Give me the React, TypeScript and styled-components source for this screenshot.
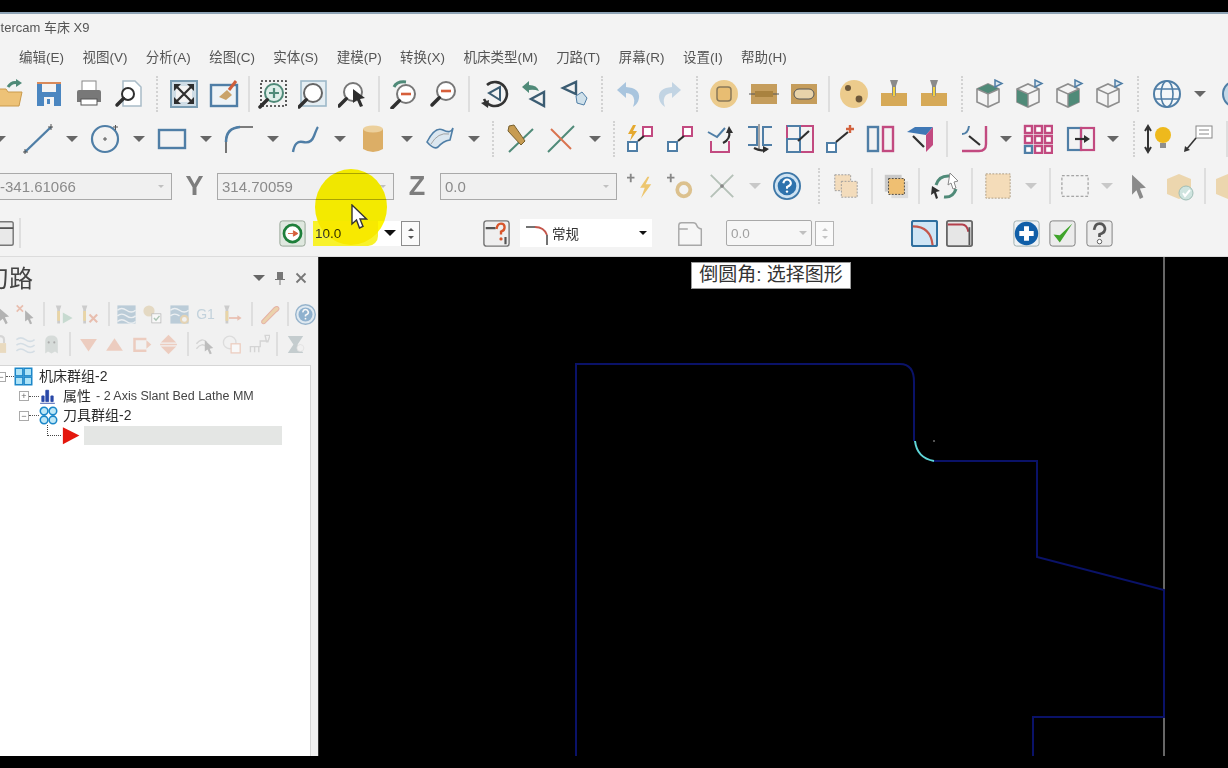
import React from 'react';
import styled, { createGlobalStyle } from 'styled-components';

const GlobalStyle = createGlobalStyle`
  html, body { margin: 0; padding: 0; background: #000; height: 100%; overflow: hidden; }
  body { font-family: "Liberation Sans", "Noto Sans CJK SC", sans-serif; }
`;

const BLUE = '#4f7ea6';
const PINK = '#c24a80';
const DARK = '#2f2f2f';
const TEAL = '#4f8a78';
const GREY = '#9a9a9a';

const Frame = styled.div`
  width: 1228px;
  height: 768px;
  padding: 12px 0;
  box-sizing: border-box;
  background: #000;
  overflow: hidden;
  display: flex;
  flex-direction: column;
  filter: blur(0.45px);
`;

const Bars = styled.header`
  position: relative;
  flex: none;
  background: #f3f3f3;
  border-top: 2px solid #8ea3b5;
  border-bottom: 1px solid #dcdcdc;
  overflow: hidden;
`;

const TitleBar = styled.div`
  box-sizing: border-box;
  height: 28px;
  padding-bottom: 3px;
  display: flex;
  align-items: center;
  margin-left: -24px;
  font-size: 13px;
  color: #555;
`;

const MenuBar = styled.nav`
  box-sizing: border-box;
  height: 30px;
  padding: 0 0 3px 19px;
  display: flex;
  align-items: center;
  gap: 18.4px;
  font-size: 13.5px;
  color: #555;
  white-space: nowrap;
`;

const Row = styled.div<{ $h: number; $shift?: number }>`
  height: ${(p) => p.$h}px;
  display: flex;
  align-items: center;
  margin-left: ${(p) => p.$shift ?? 0}px;
  white-space: nowrap;
`;

const Slot = styled.span<{ $w?: number }>`
  flex: none;
  width: ${(p) => p.$w ?? 40}px;
  display: flex;
  align-items: center;
  justify-content: center;
`;

const Sep = styled.span<{ $w: number; $dots?: boolean; $h?: number }>`
  flex: none;
  width: ${(p) => p.$w}px;
  height: ${(p) => p.$h ?? 36}px;
  display: flex;
  justify-content: center;
  &::after {
    content: '';
    display: block;
    border-left: ${(p) => (p.$dots ? '2px dotted #d2d2d2' : '2px solid #dedede')};
  }
`;

const Gap = styled.span<{ $w: number }>`
  flex: none;
  width: ${(p) => p.$w}px;
`;

const Caret = styled.span<{ $w?: number; $dim?: boolean; $dark?: boolean }>`
  flex: none;
  width: ${(p) => p.$w ?? 27}px;
  display: flex;
  justify-content: center;
  &::after {
    content: '';
    border-left: 6.5px solid transparent;
    border-right: 6.5px solid transparent;
    border-top: 6px solid ${(p) => (p.$dim ? '#c8c8c8' : p.$dark ? '#111' : '#666')};
  }
`;

const Axis = styled.span<{ $w: number }>`
  flex: none;
  width: ${(p) => p.$w}px;
  text-align: center;
  font-size: 27px;
  font-weight: 700;
  color: #7d7d7d;
`;

const Field = styled.span<{ $w: number; $pad?: number }>`
  flex: none;
  box-sizing: border-box;
  width: ${(p) => p.$w}px;
  height: 27px;
  display: flex;
  align-items: center;
  justify-content: space-between;
  padding: 0 4px 0 ${(p) => p.$pad ?? 4}px;
  border: 1px solid #a9a9a9;
  background: #f0f0f0;
  font-size: 15px;
  color: #8b8b8b;
  &::after {
    content: '';
    border-left: 3px solid transparent;
    border-right: 3px solid transparent;
    border-top: 3px solid #c0c0c0;
    margin-right: 3px;
  }
`;

const SmallField = styled(Field)`
  height: 26px;
  background: #f6f6f6;
  border-radius: 2px;
  font-size: 13.5px;
  color: #a0a0a0;
  &::after {
    border-left-width: 4px;
    border-right-width: 4px;
    border-top-width: 4px;
    margin-right: 0;
  }
`;

const NumberBox = styled.span`
  flex: none;
  box-sizing: border-box;
  width: 88px;
  height: 25px;
  display: flex;
  align-items: center;
  background: #fff;
`;

const NumberText = styled.span`
  width: 65px;
  height: 25px;
  line-height: 25px;
  padding-left: 2px;
  box-sizing: border-box;
  background: #f8f22c;
  border-radius: 0 0 10px 0;
  font-size: 13.5px;
  color: #333;
`;

const Spinner = styled.span<{ $dim?: boolean }>`
  flex: none;
  box-sizing: border-box;
  width: 19px;
  height: 25px;
  display: flex;
  flex-direction: column;
  align-items: center;
  justify-content: center;
  gap: 5px;
  border: 1px solid ${(p) => (p.$dim ? '#b5b5b5' : '#8c8c8c')};
  background: #fafafa;
  &::before, &::after {
    content: '';
    border-left: 3px solid transparent;
    border-right: 3px solid transparent;
  }
  &::before { border-bottom: 3px solid ${(p) => (p.$dim ? '#c4c4c4' : '#555')}; }
  &::after { border-top: 3px solid ${(p) => (p.$dim ? '#c4c4c4' : '#555')}; }
`;

const Combo = styled.span`
  flex: none;
  box-sizing: border-box;
  width: 132px;
  height: 28px;
  padding: 0 4px;
  display: flex;
  align-items: center;
  gap: 4px;
  background: #fff;
  font-size: 13.5px;
  color: #333;
  &::after {
    content: '';
    margin-left: auto;
    border-left: 4.5px solid transparent;
    border-right: 4.5px solid transparent;
    border-top: 4.5px solid #111;
    margin-right: 1px;
  }
`;

const Highlight = styled.div`
  position: absolute;
  left: 315px;
  top: 155px;
  width: 72px;
  height: 76px;
  border-radius: 50%;
  background: #fff600;
  mix-blend-mode: multiply;
  pointer-events: none;
`;

const Pointer = styled.svg`
  position: absolute;
  left: 350px;
  top: 190px;
`;

const Main = styled.main`
  flex: 1;
  min-height: 0;
  display: flex;
`;

const Panel = styled.aside`
  flex: none;
  width: 318px;
  background: #f1f1f1;
  display: flex;
  flex-direction: column;
  overflow: hidden;
`;

const PanelHead = styled.div`
  box-sizing: border-box;
  height: 42px;
  flex: none;
  display: flex;
  align-items: center;
  justify-content: space-between;
  padding: 0 11px 0 0;
`;

const PanelTitle = styled.h2`
  margin: 0 0 4px -15px;
  font-size: 24px;
  font-weight: 400;
  color: #444;
`;

const PanelActions = styled.div`
  display: flex;
  align-items: center;
  gap: 9px;
`;

const Tree = styled.div`
  flex: 1;
  margin: 6px 7px 0 -1px;
  padding-top: 1px;
  background: #fff;
  border: 1px solid #d6d6d6;
  border-bottom: 0;
`;

const Node = styled.div<{ $indent: number }>`
  height: 19.5px;
  display: flex;
  align-items: center;
  margin-left: ${(p) => p.$indent}px;
  font-size: 14px;
  color: #2d2d2d;
  white-space: nowrap;
`;

const Expander = styled.span`
  flex: none;
  box-sizing: border-box;
  width: 10px;
  height: 10px;
  border: 1px solid #aaa;
  font-size: 9px;
  line-height: 8px;
  text-align: center;
  color: #666;
`;

const Link = styled.span<{ $w: number }>`
  flex: none;
  width: ${(p) => p.$w}px;
  border-top: 1px dotted #555;
`;

const Elbow = styled.span`
  flex: none;
  width: 13px;
  height: 10px;
  margin-top: -10px;
  border-left: 1px dotted #444;
  border-bottom: 1px dotted #444;
`;

const NodeLabel = styled.span<{ $gap: number }>`
  margin: 0 0 3px ${(p) => p.$gap}px;
`;

const NodeMeta = styled.span`
  margin-left: 5px;
  font-size: 12.5px;
  color: #444;
`;

const EmptyName = styled.span`
  width: 198px;
  height: 19px;
  margin-left: 4px;
  background: #e4e6e4;
`;

const Canvas = styled.section`
  position: relative;
  flex: 1;
  background: #000;
  border-left: 1px solid #333;
  overflow: hidden;
`;

const Drawing = styled.svg`
  display: block;
  width: 100%;
  height: 100%;
`;

const Prompt = styled.div`
  position: absolute;
  left: 372px;
  top: 5px;
  box-sizing: border-box;
  width: 160px;
  height: 27px;
  line-height: 23px;
  text-align: center;
  background: #fff;
  border: 1px solid #9a9a9a;
  font-size: 19px;
  color: #333;
  white-space: nowrap;
`;

const Glyph = styled.svg<{ $dim?: boolean }>`
  display: block;
  flex: none;
  opacity: ${(p) => (p.$dim ? 0.5 : 1)};
`;

const glass = (x: number, y: number, r: number, fill = '#fff', c = '#555') => (
  <>
    <circle cx={x} cy={y} r={r} fill={fill} stroke={c} strokeWidth="2" />
    <path d={`M${x - r * 0.75} ${y + r * 0.75}L${x - r - 5} ${y + r + 5}`} stroke={DARK} strokeWidth="3.5" strokeLinecap="round" />
  </>
);

const arrow = (d: string, c = DARK) => <path d={d} fill="none" stroke={c} strokeWidth="2.2" />;

const cube = (side: 'top' | 'left' | 'right' | 'none') => (
  <>
    <path d="M3 10l11-5 11 5v13l-11 5-11-5z" fill="#f4f4f4" stroke="#8e8e8e" strokeWidth="1.6" />
    {side === 'top' && <path d="M3 10l11-5 11 5-11 5z" fill={TEAL} />}
    {side === 'left' && <path d="M3 10l11 5v13l-11-5z" fill={TEAL} />}
    {side === 'right' && <path d="M25 10l-11 5v13l11-5z" fill={TEAL} />}
    <path d="M3 10l11 5 11-5M14 15v13" fill="none" stroke="#8e8e8e" strokeWidth="1.4" />
    <path d="M21 8V1l7 3.5z" fill="#dfe8ef" stroke={BLUE} strokeWidth="1.5" />
  </>
);

const pair = (a: string, b: string) => (
  <>
    <rect x="3" y="18" width="9" height="9" fill="#fff" stroke={a} strokeWidth="2" />
    <rect x="18" y="3" width="9" height="9" fill="#fff" stroke={b} strokeWidth="2" />
    {arrow('M13 17l6-5', DARK)}
  </>
);

const shapes: Record<string, React.ReactNode> = {
  folder: (
    <>
      <path d="M2 10h10l2 3h14l-3 14H2z" fill="#edc277" stroke="#c99a4c" />
      <path d="M14 8q4-6 10-4" fill="none" stroke={TEAL} strokeWidth="3" />
      <path d="M22 0l6 4-6 4z" fill={TEAL} />
    </>
  ),
  save: (
    <>
      <path d="M3 3h24v24H3z" fill="#4b86c0" />
      <path d="M3 3h24v2H3z" fill="#d98a5a" />
      <rect x="8" y="5" width="14" height="8" fill="#f3f3f3" />
      <rect x="10" y="18" width="10" height="9" fill="#f3f3f3" />
      <rect x="13" y="20" width="3" height="5" fill="#4b86c0" />
    </>
  ),
  print: (
    <>
      <rect x="8" y="2" width="14" height="12" fill="#fff" stroke="#888" />
      <path d="M3 13q0-2 2-2h20q2 0 2 2v10H3z" fill="#787878" />
      <rect x="7" y="20" width="16" height="6" fill="#fff" stroke="#555" />
    </>
  ),
  preview: (
    <>
      <path d="M9 2h12l6 6v19H9z" fill="#fff" stroke="#a9bcc8" strokeWidth="1.5" />
      {glass(14, 15, 6, '#fff', DARK)}
    </>
  ),
  fit: (
    <>
      <rect x="2" y="2" width="26" height="26" fill="#cfdde6" stroke="#7b9db3" strokeWidth="2" />
      <rect x="7" y="7" width="16" height="16" fill="#f3f3f3" />
      {arrow('M7 7l16 16M23 7L7 23')}
      <path d="M5 5h7l-7 7zM25 5v7l-7-7zM5 25v-7l7 7zM25 25h-7l7-7z" fill={DARK} />
    </>
  ),
  paint: (
    <>
      <rect x="2" y="6" width="26" height="21" fill="#eef3f6" stroke={BLUE} strokeWidth="2.4" />
      <path d="M10 18l8-7 5 5-6 5z" fill="#c9a36a" />
      <path d="M20 11l7-9" stroke="#d05f3b" strokeWidth="3" />
    </>
  ),
  zoomWin: (
    <>
      <rect x="3" y="2" width="25" height="25" fill="none" stroke="#333" strokeWidth="1.6" strokeDasharray="2 2" />
      {glass(16, 14, 9, '#dfeee9', TEAL)}
      <path d="M16 9v10M11 14h10" stroke={TEAL} strokeWidth="2.2" />
    </>
  ),
  zoomGlass: (
    <>
      <rect x="3" y="2" width="25" height="25" fill="#e5eef3" stroke="#9db8c9" strokeWidth="1.6" />
      {glass(15, 14, 9, '#fff', '#666')}
    </>
  ),
  zoomCursor: (
    <>
      {glass(15, 13, 9, '#fff', '#777')}
      <path d="M15 10l12 9-5 1 3 7-3 1-3-7-4 3z" fill={DARK} />
    </>
  ),
  zoomOutB: (
    <>
      <path d="M5 8q3-6 12-5" fill="none" stroke={TEAL} strokeWidth="3" />
      {glass(17, 15, 9, '#fff', '#777')}
      <path d="M12 15h10" stroke="#d65f3b" strokeWidth="2.6" />
    </>
  ),
  zoomOut: (
    <>
      {glass(17, 12, 9, '#fff', '#777')}
      <path d="M12 12h10" stroke="#d65f3b" strokeWidth="2.6" />
    </>
  ),
  rotA: (
    <>
      <path d="M8 6a12 12 0 1 1-3 14" fill="none" stroke="#333" strokeWidth="2.6" />
      <path d="M2 24l8-3-1 8z" fill="#333" />
      <path d="M21 8v13L10 14z" fill="none" stroke="#3b5c72" strokeWidth="2" />
    </>
  ),
  undoA: (
    <>
      <path d="M3 8l7-6v4q8 0 10 6-5-2-10-1v3z" fill={TEAL} />
      <path d="M25 13v14l-13-7z" fill="none" stroke="#3b5c72" strokeWidth="2.4" />
    </>
  ),
  planeA: (
    <>
      <path d="M17 3v12L4 9z" fill="none" stroke="#3b5c72" strokeWidth="2.4" />
      <path d="M17 17l6-4 5 6-3 7-7-2z" fill="#cfe0ea" stroke={BLUE} />
    </>
  ),
  undo: <path d="M3 11l9-8v5q14 1 13 11-1 6-6 9 3-8-1-12-3-2-6-2v5z" fill="#a9c5de" />,
  redo: <path d="M27 11l-9-8v5Q4 9 5 19q1 6 6 9-3-8 1-12 3-2 6-2v5z" fill="#c2d4e3" />,
  badge: (
    <>
      <circle cx="15" cy="15" r="14" fill="#eccb8c" />
      <rect x="8" y="8" width="14" height="14" rx="3" fill="#e8bd72" stroke="#8a7a5a" strokeWidth="1.5" />
    </>
  ),
  slab: (
    <>
      <rect x="2" y="5" width="26" height="20" fill="#c59d5c" />
      <path d="M0 15h30" stroke="#555" strokeWidth="1" />
      <rect x="6" y="12" width="18" height="6" fill="#a9823f" />
    </>
  ),
  slabO: (
    <>
      <rect x="2" y="5" width="26" height="20" fill="#c59d5c" />
      <rect x="5" y="10" width="20" height="10" rx="5" fill="#e8d3aa" stroke="#555" />
    </>
  ),
  ball: (
    <>
      <circle cx="15" cy="15" r="14" fill="#eccb8c" />
      <circle cx="9" cy="9" r="3" fill="#6c573a" />
      <circle cx="20" cy="20" r="3.4" fill="#6c573a" />
    </>
  ),
  mill: (
    <>
      <rect x="2" y="14" width="26" height="13" fill="#d6a957" />
      <path d="M11 1h8l-2 6v9q-2 3-4 0V7z" fill="#8a8a8a" />
      <path d="M14 8h2v9h-2z" fill="#f2d23e" />
    </>
  ),
  cubeTop: cube('top'),
  cubeLeft: cube('left'),
  cubeRight: cube('right'),
  cubePlain: cube('none'),
  globe: (
    <>
      <circle cx="15" cy="15" r="13" fill="#f4f7f9" stroke={BLUE} strokeWidth="2" />
      <ellipse cx="15" cy="15" rx="6" ry="13" fill="none" stroke={BLUE} strokeWidth="1.6" />
      <path d="M3 10h24M3 20h24" stroke={BLUE} strokeWidth="1.6" />
    </>
  ),
  disc: <circle cx="18" cy="15" r="13" fill="#c3d8e8" stroke={BLUE} strokeWidth="2" />,
  line: (
    <>
      <path d="M2 28L28 3" stroke={BLUE} strokeWidth="2.4" />
      <path d="M25 3h6M28 0v6M-1 28h6M2 25v6" stroke="#555" strokeWidth="1" />
    </>
  ),
  circle: (
    <>
      <circle cx="15" cy="15" r="13" fill="none" stroke={BLUE} strokeWidth="2.2" />
      <path d="M13 15h4M15 13v4M23 3h5M25.500 1v5" stroke="#555" strokeWidth="1" />
    </>
  ),
  rect: <rect x="2" y="6" width="26" height="18" fill="none" stroke={BLUE} strokeWidth="2.4" />,
  arc: (
    <>
      <path d="M2 29V18Q2 4 16 3h13" fill="none" stroke="#555" strokeWidth="1.6" />
      <path d="M2 18Q2 4 16 3" fill="none" stroke={BLUE} strokeWidth="2.6" />
    </>
  ),
  spline: <path d="M2 28q2-12 10-10t11-6 4-9" fill="none" stroke={BLUE} strokeWidth="2.4" />,
  cyl: (
    <>
      <path d="M5 5v20q10 6 20 0V5z" fill="#dcae66" />
      <ellipse cx="15" cy="5" rx="10" ry="3.500" fill="#ecd09c" />
    </>
  ),
  surface: (
    <>
      <path d="M2 18Q10 2 18 6t10-2l-3 12q-7 1-12 7-4 3-11-5z" fill="#dbe7f0" stroke={BLUE} strokeWidth="1.6" />
      <path d="M6 20Q13 8 24 10" fill="none" stroke="#a3a3a3" />
    </>
  ),
  trim: (
    <>
      <path d="M4 28L28 5" stroke={TEAL} strokeWidth="2" />
      <path d="M4 2l5-1 11 16-4 4L3 7z" fill="#c79c52" stroke="#77602f" />
    </>
  ),
  cross: (
    <>
      <path d="M2 28L28 2" stroke={TEAL} strokeWidth="2" />
      <path d="M5 5l20 20" stroke="#d9734f" strokeWidth="2" />
    </>
  ),
  boltPair: (
    <>
      {pair(BLUE, PINK)}
      <path d="M8 1L3 10h4l-2 7 7-10H8l3-6z" fill="#e5a92f" />
    </>
  ),
  plainPair: pair(BLUE, PINK),
  rotatePath: (
    <>
      <path d="M3 8l9 5 8-9" fill="none" stroke={BLUE} strokeWidth="2" />
      <path d="M6 17v11h18V17" fill="none" stroke={PINK} strokeWidth="2" />
      {arrow('M18 19q8-4 6-12')}
      <path d="M24 2l4 7h-7z" fill={DARK} />
    </>
  ),
  mirror: (
    <>
      <path d="M3 3h9v18H3M27 3h-9v18h9" fill="none" stroke={BLUE} strokeWidth="2" />
      <path d="M14 0v26" stroke="#555" strokeWidth="1" />
      {arrow('M9 24q7 4 13 1')}
      <path d="M24 25l-6 4v-7z" fill={DARK} />
    </>
  ),
  scale: (
    <>
      <rect x="2" y="2" width="26" height="26" fill="none" stroke={PINK} strokeWidth="2" />
      <path d="M2 15v13h13V15zM2 2h13v13" fill="none" stroke={BLUE} strokeWidth="2" />
      {arrow('M13 17L24 7')}
    </>
  ),
  extend: (
    <>
      <rect x="2" y="19" width="9" height="9" fill="#fff" stroke={BLUE} strokeWidth="2" />
      {arrow('M11 18L23 8')}
      <path d="M25 1v8M21 5h8" stroke="#d2613c" strokeWidth="2.4" />
    </>
  ),
  columns: (
    <>
      <rect x="3" y="3" width="10" height="24" fill="none" stroke={BLUE} strokeWidth="2.4" />
      <rect x="18" y="3" width="10" height="24" fill="none" stroke={PINK} strokeWidth="2.4" />
    </>
  ),
  box3d: (
    <>
      <path d="M2 8l8-5h18l-7 8z" fill="#3f78b5" />
      <path d="M21 11l7-8v18l-7 7z" fill={PINK} />
      {arrow('M8 12l11 11')}
    </>
  ),
  fillet: (
    <>
      <path d="M3 27h17q7 0 7-7V2" fill="none" stroke={PINK} strokeWidth="2.4" />
      <path d="M3 10q6 0 7-8" fill="none" stroke={BLUE} strokeWidth="2" />
      {arrow('M10 12l11 9')}
    </>
  ),
  grid: (
    <>
      {[2, 12, 22].map((x) =>
        [2, 12, 22].map((y) => (
          <rect key={`${x}-${y}`} x={x} y={y} width="7" height="7" fill="#fff" stroke={x === 2 && y === 22 ? BLUE : PINK} strokeWidth="2.4" />
        ))
      )}
    </>
  ),
  moveTo: (
    <>
      <rect x="2" y="4" width="13" height="22" fill="none" stroke={BLUE} strokeWidth="2.2" />
      <rect x="15" y="4" width="13" height="22" fill="none" stroke={PINK} strokeWidth="2.2" />
      {arrow('M9 15h11')}
      <path d="M24 15l-6 4v-8z" fill={DARK} />
    </>
  ),
  bulb: (
    <>
      <path d="M4 3v24M1 7l3-5 3 5M1 23l3 5 3-5" fill="none" stroke="#333" strokeWidth="2" />
      <circle cx="19" cy="11" r="8" fill="#eeb91c" />
      <rect x="16" y="19" width="6" height="5" fill="#8e8e8e" />
    </>
  ),
  note: (
    <>
      <rect x="13" y="2" width="16" height="12" fill="#fff" stroke="#888" />
      <path d="M16 6h10M16 10h10" stroke="#888" />
      <path d="M13 14L3 26" stroke="#333" strokeWidth="1.6" />
      <path d="M1 28l1-6 5 4z" fill="#333" />
    </>
  ),
  plusBolt: (
    <>
      <path d="M4 2v9M0 6h8" stroke="#888" strokeWidth="2" />
      <path d="M22 5l-8 12h5l-4 11 11-15h-6l4-8z" fill="#edc66f" />
    </>
  ),
  plusGear: (
    <>
      <path d="M4 2v9M0 6h8" stroke="#888" strokeWidth="2" />
      <circle cx="18" cy="19" r="7" fill="none" stroke="#dcc18e" strokeWidth="4" />
    </>
  ),
  crossGrey: (
    <>
      <path d="M3 3l24 24M27 3L3 27" stroke="#b5c1b8" strokeWidth="2" />
      <circle cx="15" cy="15" r="2" fill="#888" />
    </>
  ),
  help: (
    <>
      <circle cx="15" cy="15" r="14" fill="#cfe3f2" stroke="#3f78a8" strokeWidth="2" />
      <circle cx="15" cy="15" r="10" fill="#2f73ad" />
      <path d="M11 12q1-4 4-4t4 3-4 5v2" fill="none" stroke="#fff" strokeWidth="2.2" />
      <circle cx="15" cy="21" r="1.300" fill="#fff" />
    </>
  ),
  dotStack: (
    <>
      <rect x="3" y="3" width="17" height="17" fill="#f3dcbc" stroke="#999" strokeDasharray="2 1.500" />
      <rect x="10" y="10" width="17" height="17" fill="#f3dcbc" stroke="#999" strokeDasharray="2 1.500" />
    </>
  ),
  solidStack: (
    <>
      <rect x="3" y="3" width="18" height="18" fill="#c9c9c9" />
      <rect x="10" y="10" width="18" height="18" fill="#ddd" />
      <rect x="7" y="7" width="17" height="17" fill="#efbf72" stroke="#444" strokeDasharray="2 1.500" />
    </>
  ),
  swap: (
    <>
      <path d="M6 14q3-10 14-9" fill="none" stroke={TEAL} strokeWidth="3" />
      <path d="M26 18q-3 9-12 8" fill="none" stroke={TEAL} strokeWidth="3" />
      <path d="M2 15l8 5-4 1 2 6-2 1-2-6-3 2z" fill={DARK} />
      <path d="M20 2l8 8-4 1 2 6-3 1-2-6-3 2z" fill="#fff" stroke="#888" />
    </>
  ),
  dotFill: <rect x="2" y="2" width="26" height="26" fill="#f4dcb9" stroke="#aa9a80" strokeDasharray="2 1.500" />,
  dotEmpty: <rect x="1" y="4" width="28" height="22" fill="none" stroke="#888" strokeDasharray="3 2" />,
  cursor: <path d="M7 2l16 15-7 1 4 10-4 2-4-10-5 5z" fill="#8a8a8a" />,
  boxCheck: (
    <>
      <path d="M3 8l12-5 12 5v15l-12 5-12-5z" fill="#ecd6ae" />
      <circle cx="22" cy="22" r="7" fill="#cfe4df" stroke="#9fbdb5" />
      <path d="M19 22l2 3 5-6" fill="none" stroke="#fff" strokeWidth="2" />
    </>
  ),
  boxTan: <path d="M3 8l12-5 12 5v15l-12 5-12-5z" fill="#ecd6ae" />,
  window: (
    <>
      <rect x="3" y="2" width="25" height="26" rx="2" fill="#e9e9e9" stroke="#777" strokeWidth="1.6" />
      <path d="M4 9h24" stroke="#555" strokeWidth="2" />
    </>
  ),
  target: (
    <>
      <rect x="1" y="1" width="28" height="28" rx="3" fill="#dfe8df" stroke="#8f9f90" />
      <circle cx="15" cy="15" r="9.500" fill="#fff" stroke="#1e7f3a" strokeWidth="3" />
      <path d="M10 15h6v-3l5 3-5 3v-3" fill="#d65f3b" stroke="#d65f3b" />
    </>
  ),
  ask: (
    <>
      <rect x="1" y="1" width="28" height="28" rx="3" fill="#efefef" stroke="#777" strokeWidth="1.6" />
      <path d="M3 9h11M25 19v8" stroke="#555" strokeWidth="2.4" />
      <path d="M15 10q1-6 5-6t4 4-4 5v3" fill="none" stroke="#d8562c" strokeWidth="2.6" />
      <circle cx="20" cy="21" r="1.800" fill="#d8562c" />
    </>
  ),
  cornerGrey: (
    <path d="M2 28V6q0-3 3-3h13q3 0 4 3 1 3 5 4v18zM2 10h10" fill="#f6f6f6" stroke="#a8a8a8" strokeWidth="1.6" />
  ),
  cornerBlue: (
    <>
      <rect x="1" y="1" width="28" height="28" rx="2" fill="#cfe5f5" stroke="#2f6f9f" strokeWidth="2.4" />
      <path d="M2 7q20 0 22 21" fill="none" stroke="#c4564b" strokeWidth="2.4" />
    </>
  ),
  cornerGreyRed: (
    <>
      <rect x="1" y="1" width="28" height="28" rx="2" fill="#e6e6e6" stroke="#666" strokeWidth="2" />
      <path d="M2 5h16q5 0 7 8" fill="none" stroke="#b33f4b" strokeWidth="2.4" />
      <path d="M26 8v20" stroke="#555" strokeWidth="2" />
    </>
  ),
  plus: (
    <>
      <rect x="1" y="1" width="28" height="28" rx="3" fill="#eef2f5" stroke="#9aa" />
      <circle cx="15" cy="15" r="13" fill="#105fa8" />
      <path d="M15 7v16M7 15h16" stroke="#fff" strokeWidth="5.500" />
    </>
  ),
  ok: (
    <>
      <rect x="1" y="1" width="28" height="28" rx="3" fill="#ececec" stroke="#777" />
      <path d="M5 16l7 9L26 4 12 17z" fill="#3fa42b" />
    </>
  ),
  question: (
    <>
      <rect x="1" y="1" width="28" height="28" rx="3" fill="#ececec" stroke="#777" />
      <path d="M9 11q1-7 6-7t6 5-6 7v3" fill="none" stroke="#555" strokeWidth="3" />
      <circle cx="15" cy="24" r="2.500" fill="#fff" stroke="#555" />
    </>
  ),
  waves: (
    <>
      <rect x="2" y="2" width="26" height="26" fill="#87a9c0" />
      <path d="M2 9q6-5 13 0t13 0M2 17q6-5 13 0t13 0M2 25q6-5 13 0t13 0" fill="none" stroke="#e8eff4" strokeWidth="2" />
    </>
  ),
  wavesGear: (
    <>
      <rect x="2" y="2" width="26" height="26" fill="#87a9c0" />
      <path d="M2 9q6-5 13 0t13 0M2 17q6-5 13 0" fill="none" stroke="#e8eff4" strokeWidth="2" />
      <circle cx="22" cy="22" r="5" fill="#f1f1f1" stroke="#d9b779" strokeWidth="3" />
    </>
  ),
  stackCheck: (
    <>
      <circle cx="10" cy="10" r="8" fill="#d9c297" />
      <rect x="14" y="14" width="13" height="13" fill="#fff" stroke="#777" />
      <path d="M17 20l3 3 5-6" fill="none" stroke="#6a9a7a" strokeWidth="2" />
    </>
  ),
  toolRun: (
    <>
      <path d="M4 2h8l-2 6v20H6V8z" fill="#a8a8a8" />
      <path d="M6 10h4v14H6z" fill="#e2bb5d" />
      <path d="M14 12l14 8-14 8z" fill="#9fc4b0" />
    </>
  ),
  toolX: (
    <>
      <path d="M4 2h8l-2 6v20H6V8z" fill="#a8a8a8" />
      <path d="M6 10h4v14H6z" fill="#e2bb5d" />
      <path d="M15 15l11 11M26 15L15 26" stroke="#e08d6f" strokeWidth="3" />
    </>
  ),
  xCursor: (
    <>
      <path d="M1 2l9 9M10 2l-9 9" stroke="#e08d6f" strokeWidth="2.4" />
      <path d="M13 9l12 11-5 1 3 7-3 1-3-7-4 3z" fill="#777" />
    </>
  ),
  cursorSmall: <path d="M8 5l15 13-6 1 4 8-3 2-4-8-5 4z" fill="#777" />,
  toolMove: (
    <>
      <path d="M3 2h8l-2 6v20H5V8z" fill="#a8a8a8" />
      <path d="M5 10h4v14H5z" fill="#e2bb5d" />
      <path d="M10 20h14" stroke="#e08d6f" strokeWidth="2.400" />
      <path d="M28 20l-6 4v-8z" fill="#e08d6f" />
    </>
  ),
  wrench: <path d="M4 24L22 5q4-3 6 0t-3 6L8 28q-5 1-4-4z" fill="#e7b56a" stroke="#d9735a" strokeWidth="1.500" />,
  lock: (
    <>
      <path d="M8 13V8q0-5 6-5t6 5v5" fill="none" stroke="#bbb" strokeWidth="3" />
      <rect x="5" y="13" width="18" height="14" fill="#e3c48f" />
    </>
  ),
  wavesPale: <path d="M2 8q6-5 13 0t13 0M2 16q6-5 13 0t13 0M2 24q6-5 13 0t13 0" fill="none" stroke="#b9cbd8" strokeWidth="2.200" />,
  ghost: (
    <>
      <path d="M6 28V10q0-8 9-8t9 8v18l-4-3-5 3-5-3z" fill="#bcc6c2" />
      <circle cx="11" cy="12" r="1.500" fill="#666" />
      <circle cx="19" cy="12" r="1.500" fill="#666" />
    </>
  ),
  down: <path d="M3 7h24L15 25z" fill="#e8a98f" />,
  up: <path d="M3 24h24L15 6z" fill="#e8a98f" />,
  bracket: (
    <>
      <path d="M22 7H5v17h17" fill="none" stroke="#e8a98f" strokeWidth="3.600" />
      <path d="M29 15l-7-6v12z" fill="#e8a98f" />
    </>
  ),
  updown: <path d="M15 1l11 11H4zM15 29l11-11H4zM3 14h24v2H3z" fill="#e8a98f" />,
  waveCursor: (
    <>
      <path d="M2 14q8-10 15-2M2 21q8-10 15-2" fill="none" stroke="#b9b9b9" strokeWidth="2" />
      <path d="M14 9l12 11-5 1 3 7-3 1-3-7-4 3z" fill="#8a8a8a" />
    </>
  ),
  circleSquare: (
    <>
      <circle cx="11" cy="12" r="9" fill="none" stroke="#c9c9c9" strokeWidth="2" />
      <rect x="13" y="14" width="13" height="13" fill="#fff" stroke="#e8a98f" strokeWidth="1.800" />
    </>
  ),
  toolStep: (
    <path d="M2 26v-8h14v-8h12M23 2h7l-3 9h-2zM8 18v8M14 18v8" fill="none" stroke="#b8b8b8" strokeWidth="2" />
  ),
  hourglass: (
    <>
      <path d="M4 3h22l-8 12 8 12H4l8-12z" fill="#98a9ad" />
      <circle cx="22" cy="20" r="5" fill="#f1f1f1" stroke="#ccc" />
    </>
  ),
  treeGrid: (
    <>
      {[2, 16].map((x) =>
        [2, 16].map((y) => <rect key={`${x}${y}`} x={x} y={y} width="12" height="12" fill="#aee3f7" stroke="#1b87c9" strokeWidth="2.400" />)
      )}
    </>
  ),
  treeChart: <path d="M2 27h26M5 24V14h4v10zM12 24V4h5v20zM21 24V14h4v10z" fill="#2948a8" stroke="#2948a8" strokeWidth="1.500" />,
  treeCircles: (
    <>
      {[8, 22].map((x) =>
        [8, 22].map((y) => <circle key={`${x}${y}`} cx={x} cy={y} r="6" fill="#bfe8f7" stroke="#1b87c9" strokeWidth="2.400" />)
      )}
    </>
  ),
  play: <path d="M3 2l26 13L3 29z" fill="#e4170d" />
};

const Icon = ({ n, size = 30, dim }: { n: string; size?: number; dim?: boolean }) => (
  <Glyph $dim={dim} width={size} height={size} viewBox="0 0 30 30">
    {shapes[n]}
  </Glyph>
);

const Tool = ({ n, w, dim, size }: { n: string; w?: number; dim?: boolean; size?: number }) => (
  <Slot $w={w}>
    <Icon n={n} dim={dim} size={size} />
  </Slot>
);

const PanelTool = ({ n, w = 26 }: { n: string; w?: number }) => (
  <Slot $w={w}>
    <Icon n={n} size={21} dim />
  </Slot>
);

const G1 = styled.span`
  font-size: 14px;
  color: #c3d2dc;
`;

const menus = ['编辑(E)', '视图(V)', '分析(A)', '绘图(C)', '实体(S)', '建模(P)', '转换(X)', '机床类型(M)', '刀路(T)', '屏幕(R)', '设置(I)', '帮助(H)'];

const App = () => {
  return (
    <Frame>
      <GlobalStyle />
      <Bars>
        <TitleBar>Mastercam 车床 X9</TitleBar>
        <MenuBar>
          {menus.map((m) => (
            <span key={m}>{m}</span>
          ))}
        </MenuBar>

        <Row $h={44} $shift={-11}>
          <Tool n="folder" />
          <Tool n="save" />
          <Tool n="print" />
          <Tool n="preview" />
          <Sep $w={15} $dots />
          <Tool n="fit" />
          <Tool n="paint" />
          <Sep $w={9} />
          <Tool n="zoomWin" />
          <Tool n="zoomGlass" />
          <Tool n="zoomCursor" />
          <Sep $w={11} />
          <Tool n="zoomOutB" />
          <Tool n="zoomOut" />
          <Sep $w={10} />
          <Tool n="rotA" />
          <Tool n="undoA" />
          <Tool n="planeA" />
          <Sep $w={15} $dots />
          <Tool n="undo" />
          <Tool n="redo" />
          <Sep $w={15} $dots />
          <Tool n="badge" />
          <Tool n="slab" />
          <Tool n="slabO" />
          <Sep $w={10} />
          <Tool n="ball" />
          <Tool n="mill" />
          <Tool n="mill" />
          <Sep $w={15} $dots />
          <Tool n="cubeTop" />
          <Tool n="cubeLeft" />
          <Tool n="cubeRight" />
          <Tool n="cubePlain" />
          <Sep $w={18} $dots />
          <Tool n="globe" />
          <Caret $w={26} />
          <Tool n="disc" />
        </Row>

        <Row $h={46} $shift={-13}>
          <Caret $w={26} />
          <Gap $w={5} />
          <Tool n="line" />
          <Caret />
          <Tool n="circle" />
          <Caret />
          <Tool n="rect" />
          <Caret />
          <Tool n="arc" />
          <Caret />
          <Tool n="spline" />
          <Caret />
          <Tool n="cyl" />
          <Caret />
          <Tool n="surface" />
          <Caret />
          <Sep $w={12} $dots />
          <Tool n="trim" w={41} />
          <Tool n="cross" w={41} />
          <Caret />
          <Sep $w={12} $dots />
          <Tool n="boltPair" />
          <Tool n="plainPair" />
          <Tool n="rotatePath" />
          <Tool n="mirror" />
          <Tool n="scale" />
          <Tool n="extend" />
          <Tool n="columns" />
          <Tool n="box3d" />
          <Sep $w={14} />
          <Tool n="fillet" />
          <Caret $w={24} />
          <Tool n="grid" />
          <Tool n="moveTo" w={46} />
          <Caret $w={18} />
          <Sep $w={24} $dots />
          <Tool n="bulb" w={26} />
          <Tool n="note" w={52} />
          <Sep $w={6} />
        </Row>

        <Row $h={48} $shift={-10}>
          <Field $w={182} $pad={9}>-341.61066</Field>
          <Axis $w={45}>Y</Axis>
          <Field $w={177}>314.70059</Field>
          <Axis $w={46}>Z</Axis>
          <Field $w={177}>0.0</Field>
          <Gap $w={4} />
          <Tool n="plusBolt" size={28} />
          <Tool n="plusGear" size={28} />
          <Tool n="crossGrey" w={41} size={28} />
          <Caret $w={26} $dim />
          <Tool n="help" w={38} size={28} />
          <Sep $w={26} $dots />
          <Tool n="dotStack" w={28} size={28} />
          <Sep $w={24} />
          <Tool n="solidStack" w={24} size={28} />
          <Sep $w={22} />
          <Tool n="swap" w={30} size={30} />
          <Sep $w={24} />
          <Tool n="dotFill" w={28} size={28} />
          <Caret $w={37} $dim />
          <Sep $w={2} />
          <Tool n="dotEmpty" w={48} size={28} />
          <Caret $w={16} $dim />
          <Tool n="cursor" w={48} size={26} />
          <Tool n="boxCheck" w={32} />
          <Sep $w={20} />
          <Tool n="boxTan" w={26} />
        </Row>

        <Row $h={46} $shift={-13}>
          <Tool n="window" w={28} size={27} />
          <Sep $w={10} $h={30} />
          <Gap $w={253} />
          <Tool n="target" w={28} size={27} />
          <Gap $w={7} />
          <NumberBox>
            <NumberText>10.0</NumberText>
            <Caret $w={23} $dark />
          </NumberBox>
          <Spinner />
          <Gap $w={63} />
          <Tool n="ask" w={26} size={27} />
          <Gap $w={11} />
          <Combo>
            <svg width="24" height="24" viewBox="0 0 24 24">
              <path d="M2 6h9" stroke="#444" strokeWidth="1.500" fill="none" />
              <path d="M11 6q9 0 12 8" stroke="#c4564b" strokeWidth="1.800" fill="none" />
              <path d="M23 14v10" stroke="#444" strokeWidth="1.500" />
            </svg>
            常规
          </Combo>
          <Gap $w={25} />
          <Tool n="cornerGrey" w={27} size={27} />
          <Gap $w={22} />
          <SmallField $w={86}>0.0</SmallField>
          <Gap $w={3} />
          <Spinner $dim />
          <Gap $w={77} />
          <Tool n="cornerBlue" w={26} size={27} />
          <Gap $w={9} />
          <Tool n="cornerGreyRed" w={27} size={27} />
          <Gap $w={40} />
          <Tool n="plus" w={26} size={27} />
          <Gap $w={10} />
          <Tool n="ok" w={26} size={27} />
          <Gap $w={11} />
          <Tool n="question" w={26} size={27} />
        </Row>

        <Highlight />
        <Pointer width="18" height="26" viewBox="0 0 18 26">
          <path d="M2 1v19l4.500-4 3 8 3.500-1.500-3-7.500h6.500z" fill="#fff" stroke="#333" strokeWidth="1.400" />
        </Pointer>
      </Bars>

      <Main>
        <Panel>
          <PanelHead>
            <PanelTitle>刀路</PanelTitle>
            <PanelActions>
              <Caret $w={12} />
              <svg width="12" height="14" viewBox="0 0 12 14">
                <path d="M3 1h6v7h2v1H1V8h2zM5.500 9h1v5h-1z" fill="#777" />
              </svg>
              <svg width="12" height="12" viewBox="0 0 12 12">
                <path d="M1.500 1.500l9 9M10.500 1.500l-9 9" stroke="#777" strokeWidth="1.800" />
              </svg>
            </PanelActions>
          </PanelHead>

          <Row $h={30} $shift={-10}>
            <PanelTool n="cursorSmall" />
            <PanelTool n="xCursor" w={20} />
            <Sep $w={16} $h={24} />
            <PanelTool n="toolRun" w={22} />
            <PanelTool n="toolX" w={30} />
            <Sep $w={9} $h={24} />
            <PanelTool n="waves" />
            <PanelTool n="stackCheck" w={27} />
            <PanelTool n="wavesGear" />
            <Slot $w={27}>
              <G1>G1</G1>
            </Slot>
            <PanelTool n="toolMove" w={27} />
            <Sep $w={12} $h={24} />
            <PanelTool n="wrench" w={22} />
            <Sep $w={16} $h={24} />
            <PanelTool n="help" w={18} />
          </Row>

          <Row $h={30} $shift={-12}>
            <PanelTool n="lock" w={24} />
            <PanelTool n="wavesPale" />
            <PanelTool n="ghost" w={27} />
            <Sep $w={10} $h={24} />
            <PanelTool n="down" />
            <PanelTool n="up" w={27} />
            <PanelTool n="bracket" w={27} />
            <PanelTool n="updown" />
            <Sep $w={14} $h={24} />
            <PanelTool n="waveCursor" w={20} />
            <PanelTool n="circleSquare" w={34} />
            <PanelTool n="toolStep" w={20} />
            <Sep $w={16} $h={24} />
            <PanelTool n="hourglass" w={20} />
          </Row>

          <Tree>
            <Node $indent={-4}>
              <Expander>−</Expander>
              <Link $w={8} />
              <Icon n="treeGrid" size={19} />
              <NodeLabel $gap={6}>机床群组-2</NodeLabel>
            </Node>
            <Node $indent={19}>
              <Expander>+</Expander>
              <Link $w={10} />
              <Icon n="treeChart" size={17} />
              <NodeLabel $gap={7}>属性</NodeLabel>
              <NodeMeta>- 2 Axis Slant Bed Lathe MM</NodeMeta>
            </Node>
            <Node $indent={19}>
              <Expander>−</Expander>
              <Link $w={10} />
              <Icon n="treeCircles" size={19} />
              <NodeLabel $gap={5}>刀具群组-2</NodeLabel>
            </Node>
            <Node $indent={47}>
              <Elbow />
              <Icon n="play" size={19} />
              <EmptyName />
            </Node>
          </Tree>
        </Panel>

        <Canvas>
          <Drawing viewBox="319 257 909 499" preserveAspectRatio="xMinYMin">
            <path d="M1164 257V756" stroke="#8a8a8a" strokeWidth="1.500" fill="none" />
            <path
              d="M576 756V364H900Q914 364 914 382V441M934 461H1037V557L1164 590V717H1033V756"
              fill="none"
              stroke="#0a1268"
              strokeWidth="2"
            />
            <path d="M915 441Q917 458 934 461" fill="none" stroke="#5fd6d8" strokeWidth="2" />
            <circle cx="934" cy="441" r="0.800" fill="#bbb" />
          </Drawing>
          <Prompt>倒圆角: 选择图形</Prompt>
        </Canvas>
      </Main>
    </Frame>
  );
};

export default App;
